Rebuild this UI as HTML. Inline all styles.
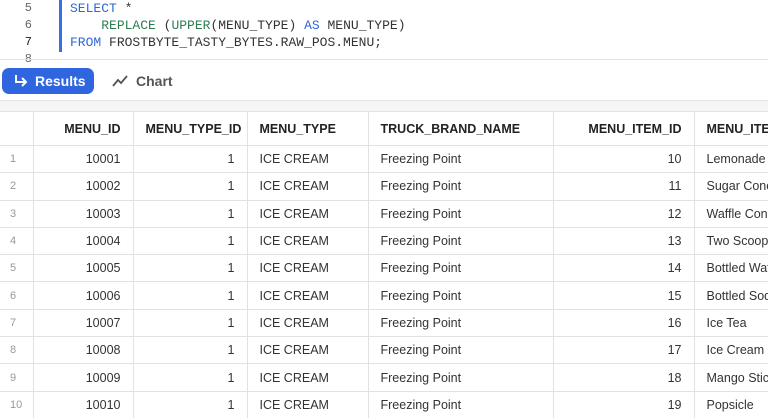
<!DOCTYPE html>
<html><head><style>
body{margin:0;width:768px;height:418px;overflow:hidden;background:#fff;font-family:"Liberation Sans",sans-serif;position:relative}
.code{position:absolute;left:0;top:0;width:768px;height:58px;font-family:"Liberation Mono",monospace;font-size:13px;color:#333}
.ln{position:absolute;left:0;width:32px;text-align:right;color:#666;font-size:12px}
.cl{position:absolute;left:70px;white-space:pre}
.k{color:#2f66d6}.g{color:#2e7d52}
.bar{position:absolute;left:59px;top:0;width:3px;height:52px;background:#3b6fe0}
.sep{position:absolute;left:0;top:59px;width:768px;height:1px;background:#e2e2e2}
.btn{position:absolute;left:2px;top:68px;width:92px;height:26px;background:#2f66e0;border-radius:7px;color:#fff;font-size:14px;font-weight:bold;line-height:26px}
.chart{position:absolute;left:112px;top:68px;height:26px;line-height:26px;font-size:14px;font-weight:bold;color:#555}
.gray{position:absolute;left:0;top:100px;width:768px;height:11px;background:#f5f5f5;border-top:1px solid #e6e6e6}
.wrap{position:absolute;left:0;top:111px;width:768px;height:307px;overflow:hidden}
table{width:820px;border-collapse:collapse;table-layout:fixed;font-size:12.5px;color:#333}
td,th{border:1px solid #e2e2e2;padding:0 12px;white-space:nowrap;overflow:hidden;height:26.3px}
th{height:33px;font-weight:bold;color:#222;font-size:12.5px;text-align:left}
.r{text-align:right}
td.n{color:#999;font-size:11px;padding-left:10px;text-align:left}
tr td:first-child,tr th:first-child{border-left:none}
</style></head><body>
<div class="code">
<div class="ln" style="top:1px">5</div><div class="ln" style="top:18px">6</div><div class="ln" style="top:35px;color:#222">7</div><div class="ln" style="top:52px">8</div>
<div class="bar"></div>
<div class="cl" style="top:1px"><span class="k">SELECT</span> *</div>
<div class="cl" style="top:18px">    <span class="g">REPLACE</span> (<span class="g">UPPER</span>(MENU_TYPE) <span class="k">AS</span> MENU_TYPE)</div>
<div class="cl" style="top:35px"><span class="k">FROM</span> FROSTBYTE_TASTY_BYTES.RAW_POS.MENU;</div>
</div>
<div class="sep"></div>
<div class="btn"><svg width="16" height="14" style="position:absolute;left:11px;top:6px" fill="none" stroke="#fff" stroke-width="2"><path d="M3 1v7h10M9 4l4 4-4 4"/></svg><span style="position:absolute;left:33px">Results</span></div>
<div class="chart"><svg width="16" height="14" style="position:absolute;left:0;top:6px" fill="none" stroke="#555" stroke-width="1.8"><path d="M1 12l5-6 3 3 6-7"/></svg><span style="position:absolute;left:24px">Chart</span></div>
<div class="gray"></div>
<div class="wrap">
<table>
<colgroup><col style="width:33px"><col style="width:100px"><col style="width:114px"><col style="width:121px"><col style="width:185px"><col style="width:141px"><col style="width:126px"></colgroup>
<tr><th></th><th class="r">MENU_ID</th><th class="r">MENU_TYPE_ID</th><th>MENU_TYPE</th><th>TRUCK_BRAND_NAME</th><th class="r">MENU_ITEM_ID</th><th>MENU_ITEM_NAME</th></tr>
<tr><td class="n">1</td><td class="r">10001</td><td class="r">1</td><td>ICE CREAM</td><td>Freezing Point</td><td class="r">10</td><td>Lemonade</td></tr>
<tr><td class="n">2</td><td class="r">10002</td><td class="r">1</td><td>ICE CREAM</td><td>Freezing Point</td><td class="r">11</td><td>Sugar Cone</td></tr>
<tr><td class="n">3</td><td class="r">10003</td><td class="r">1</td><td>ICE CREAM</td><td>Freezing Point</td><td class="r">12</td><td>Waffle Cone</td></tr>
<tr><td class="n">4</td><td class="r">10004</td><td class="r">1</td><td>ICE CREAM</td><td>Freezing Point</td><td class="r">13</td><td>Two Scoop</td></tr>
<tr><td class="n">5</td><td class="r">10005</td><td class="r">1</td><td>ICE CREAM</td><td>Freezing Point</td><td class="r">14</td><td>Bottled Water</td></tr>
<tr><td class="n">6</td><td class="r">10006</td><td class="r">1</td><td>ICE CREAM</td><td>Freezing Point</td><td class="r">15</td><td>Bottled Soda</td></tr>
<tr><td class="n">7</td><td class="r">10007</td><td class="r">1</td><td>ICE CREAM</td><td>Freezing Point</td><td class="r">16</td><td>Ice Tea</td></tr>
<tr><td class="n">8</td><td class="r">10008</td><td class="r">1</td><td>ICE CREAM</td><td>Freezing Point</td><td class="r">17</td><td>Ice Cream</td></tr>
<tr><td class="n">9</td><td class="r">10009</td><td class="r">1</td><td>ICE CREAM</td><td>Freezing Point</td><td class="r">18</td><td>Mango Sticky</td></tr>
<tr><td class="n">10</td><td class="r">10010</td><td class="r">1</td><td>ICE CREAM</td><td>Freezing Point</td><td class="r">19</td><td>Popsicle</td></tr>
</table>
</div>
</body></html>
